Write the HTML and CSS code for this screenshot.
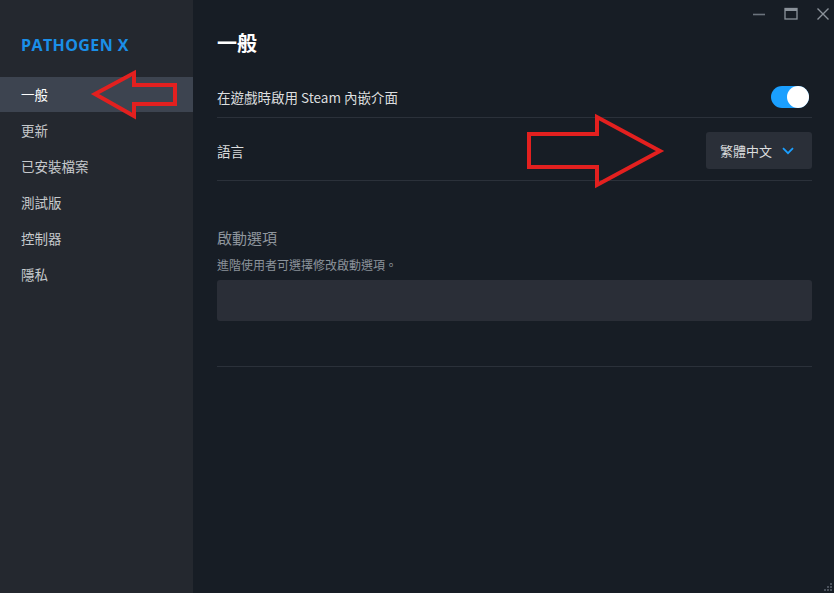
FILE: index.html
```html
<!DOCTYPE html>
<html lang="zh-TW">
<head>
    <meta charset="UTF-8">
    <meta name="viewport" content="width=device-width, initial-scale=1.0">
    <title>PATHOGEN X 內容</title>
    <link rel="stylesheet" href="styles.css">
</head>
<body>
    <div class="window">
        <aside class="sidebar">
            <div class="brand">PATHOGEN X</div>
            <nav class="nav">
                <div class="nav-item active">一般</div>
                <div class="nav-item">更新</div>
                <div class="nav-item">已安裝檔案</div>
                <div class="nav-item">測試版</div>
                <div class="nav-item">控制器</div>
                <div class="nav-item">隱私</div>
            </nav>
        </aside>

        <main class="content">
            <div class="window-controls">
                <svg width="14" height="14" viewBox="0 0 14 14"><path d="M1 7.5h12" stroke="#6b737c" stroke-width="1.6"/></svg>
                <svg width="14" height="14" viewBox="0 0 14 14"><rect x="1" y="1.5" width="12" height="10.5" fill="none" stroke="#8b929a" stroke-width="1.3"/><path d="M1 3h12" stroke="#8b929a" stroke-width="2"/></svg>
                <svg width="14" height="14" viewBox="0 0 14 14"><path d="M1.5 1.5l11 11M12.5 1.5l-11 11" stroke="#8b929a" stroke-width="1.4"/></svg>
            </div>

            <h1 class="page-title">一般</h1>

            <div class="setting-row first">
                <span>在遊戲時啟用 Steam 內嵌介面</span>
                <div class="toggle"><div class="knob"></div></div>
            </div>

            <div class="setting-row second">
                <span>語言</span>
                <div class="dropdown">
                    <span>繁體中文</span>
                    <svg width="12" height="8" viewBox="0 0 12 8"><path d="M1 1.2l5 5 5-5" fill="none" stroke="#1a9fff" stroke-width="1.8"/></svg>
                </div>
            </div>

            <section class="launch">
                <div class="launch-title">啟動選項</div>
                <div class="launch-desc">進階使用者可選擇修改啟動選項。</div>
                <div class="launch-input"></div>
            </section>

            <div class="grip">
                <svg width="10" height="10" viewBox="0 0 10 10" fill="#4a515b">
                    <rect x="7" y="1" width="2" height="2"/>
                    <rect x="4" y="4" width="2" height="2"/><rect x="7" y="4" width="2" height="2"/>
                    <rect x="1" y="7" width="2" height="2"/><rect x="4" y="7" width="2" height="2"/><rect x="7" y="7" width="2" height="2"/>
                </svg>
            </div>
        </main>

        <!-- 標註箭頭 -->
        <svg class="annotations" width="834" height="593" viewBox="0 0 834 593">
            <path d="M95 94 L134 73 L134 85 L175 85 L175 104 L134 104 L134 116 Z" fill="none" stroke="#e3201f" stroke-width="4" stroke-linejoin="miter"/>
            <path d="M529 134 L597 134 L597 117 L660 151 L597 185 L597 167 L529 167 Z" fill="none" stroke="#e3201f" stroke-width="4" stroke-linejoin="miter"/>
        </svg>
    </div>
</body>
</html>
```

FILE: styles.css
```css
* {
    margin: 0;
    padding: 0;
    box-sizing: border-box;
}

body {
    font-family: "Noto Sans CJK TC", "Noto Sans", sans-serif;
    background: #171d25;
    color: #dcdedf;
    width: 834px;
    height: 593px;
    overflow: hidden;
}

.window {
    position: relative;
    display: flex;
    width: 834px;
    height: 593px;
}

.sidebar {
    width: 193px;
    background: #24282f;
    flex-shrink: 0;
}

.brand {
    padding: 35px 0 0 21px;
    font-family: "Open Sans", "Noto Sans", sans-serif;
    font-weight: 700;
    font-size: 16px;
    line-height: 20px;
    color: #1a8fe8;
    letter-spacing: 0.4px;
}

.nav {
    margin-top: 22px;
}

.nav-item {
    height: 36px;
    line-height: 36px;
    padding-left: 21px;
    font-size: 13.5px;
    color: #c6c9cc;
}

.nav-item.active {
    background: #3d4450;
    color: #ffffff;
    height: 35px;
    line-height: 35px;
}

.content {
    position: relative;
    flex: 1;
    padding: 30px 22px 0 24px;
}

.window-controls {
    position: absolute;
    top: 7px;
    right: 4px;
    display: flex;
    gap: 18px;
}

.page-title {
    font-size: 20px;
    line-height: 26px;
    font-weight: 700;
    color: #ffffff;
}

.setting-row {
    display: flex;
    justify-content: space-between;
    align-items: center;
    border-bottom: 1px solid #2b313a;
    font-size: 13.5px;
    color: #dcdedf;
}

.setting-row.first {
    margin-top: 20px;
    height: 42px;
}

.setting-row.second {
    height: 63px;
    padding-top: 3px;
}

.toggle {
    width: 38px;
    height: 22px;
    border-radius: 11px;
    background: #1a9fff;
    position: relative;
    margin-right: 3px;
}

.knob {
    position: absolute;
    right: 0;
    top: 0;
    width: 22px;
    height: 22px;
    border-radius: 50%;
    background: #ffffff;
}

.dropdown {
    display: flex;
    align-items: center;
    gap: 10px;
    width: 106px;
    height: 37px;
    padding-left: 14px;
    background: #2a2f38;
    border-radius: 3px;
    font-size: 13px;
    color: #dcdedf;
}

.launch {
    padding-top: 47px;
    padding-bottom: 45px;
    border-bottom: 1px solid #2b313a;
}

.launch-title {
    font-size: 15px;
    line-height: 20px;
    color: #8f969d;
}

.launch-desc {
    margin-top: 9px;
    font-size: 12px;
    line-height: 16px;
    color: #8b929a;
}

.launch-input {
    margin-top: 7px;
    height: 41px;
    background: #2a2e37;
    border-radius: 3px;
}

.grip {
    position: absolute;
    right: 1px;
    bottom: 1px;
    line-height: 0;
}

.annotations {
    position: absolute;
    left: 0;
    top: 0;
    pointer-events: none;
}
```
